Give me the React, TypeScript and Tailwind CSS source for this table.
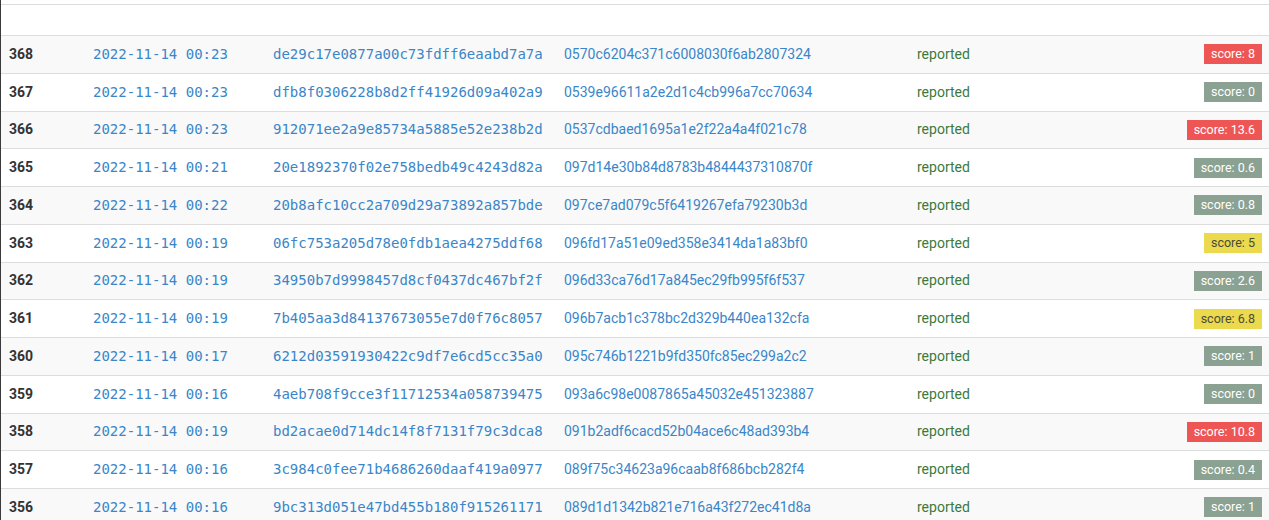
const rows: [number, string, string, string, string, string][] = [
  [368, "00:23", "de29c17e0877a00c73fdff6eaabd7a7a", "0570c6204c371c6008030f6ab2807324", "8", "red"],
  [367, "00:23", "dfb8f0306228b8d2ff41926d09a402a9", "0539e96611a2e2d1c4cb996a7cc70634", "0", "gray"],
  [366, "00:23", "912071ee2a9e85734a5885e52e238b2d", "0537cdbaed1695a1e2f22a4a4f021c78", "13.6", "red"],
  [365, "00:21", "20e1892370f02e758bedb49c4243d82a", "097d14e30b84d8783b4844437310870f", "0.6", "gray"],
  [364, "00:22", "20b8afc10cc2a709d29a73892a857bde", "097ce7ad079c5f6419267efa79230b3d", "0.8", "gray"],
  [363, "00:19", "06fc753a205d78e0fdb1aea4275ddf68", "096fd17a51e09ed358e3414da1a83bf0", "5", "yellow"],
  [362, "00:19", "34950b7d9998457d8cf0437dc467bf2f", "096d33ca76d17a845ec29fb995f6f537", "2.6", "gray"],
  [361, "00:19", "7b405aa3d84137673055e7d0f76c8057", "096b7acb1c378bc2d329b440ea132cfa", "6.8", "yellow"],
  [360, "00:17", "6212d03591930422c9df7e6cd5cc35a0", "095c746b1221b9fd350fc85ec299a2c2", "1", "gray"],
  [359, "00:16", "4aeb708f9cce3f11712534a058739475", "093a6c98e0087865a45032e451323887", "0", "gray"],
  [358, "00:19", "bd2acae0d714dc14f8f7131f79c3dca8", "091b2adf6cacd52b04ace6c48ad393b4", "10.8", "red"],
  [357, "00:16", "3c984c0fee71b4686260daaf419a0977", "089f75c34623a96caab8f686bcb282f4", "0.4", "gray"],
  [356, "00:16", "9bc313d051e47bd455b180f915261171", "089d1d1342b821e716a43f272ec41d8a", "1", "gray"],
]

const badgeColors: Record<string, string> = {
  red: "bg-[#ee5555] text-white",
  gray: "bg-[#8ba191] text-white",
  yellow: "bg-[#ebd94e] text-[#4a4a3a]",
}

export default function App() {
  return (
    <div className="h-[520px] w-[1269px] overflow-hidden bg-white border-l border-[#3a3a3a] font-['Roboto',sans-serif] text-[14px] text-[#333]">
      <div className="h-[4px]" />
      <div className="h-[31px] border-t border-[#ddd]" />
      {rows.map(([id, time, h1, h2, score, color], i) => (
        <div
          key={id}
          className={`flex h-[37.75px] items-center border-t border-[#ddd] ${i % 2 === 0 ? "bg-[#f9f9f9]" : "bg-white"}`}
        >
          <div className="w-[84px] pl-[8px] font-bold">{id}</div>
          <div className="w-[180px] pl-[8px] font-['DejaVu_Sans_Mono',monospace] text-[#3a86c8]">
            2022-11-14 {time}
          </div>
          <div className="w-[291px] pl-[8px] font-['DejaVu_Sans_Mono',monospace] text-[#3a86c8]">{h1}</div>
          <div className="w-[353px] pl-[8px] text-[#3a86c8]">{h2}</div>
          <div className="w-[200px] pl-[8px] text-[#3c7a3c]">reported</div>
          <div className="flex flex-1 justify-end pr-[7px]">
            <span className={`h-5 px-[7px] text-[12.5px] leading-5 ${badgeColors[color]}`}>score: {score}</span>
          </div>
        </div>
      ))}
    </div>
  )
}
